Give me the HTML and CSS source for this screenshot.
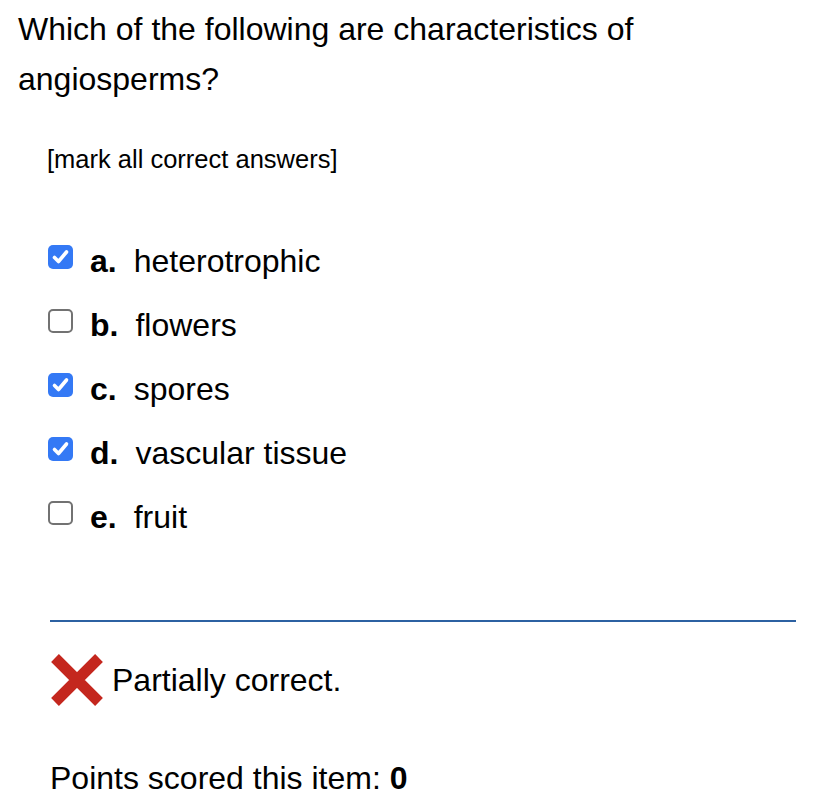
FILE: index.html
```html
<!DOCTYPE html>
<html lang="en">
<head>
<meta charset="utf-8">
<title>Question</title>
<link rel="stylesheet" href="styles.css">
</head>
<body>
<div class="question">
  <p class="prompt">Which of the following are characteristics of angiosperms?</p>
  <p class="instr">[mark all correct answers]</p>
  <ul class="options">
    <li class="option"><span class="box checked"><svg viewBox="0 0 25 24" width="25" height="24"><path d="M6.5 12.5 L10.5 16.5 L18.5 7" fill="none" stroke="#fff" stroke-width="3.6" stroke-linecap="round" stroke-linejoin="round"/></svg></span><b class="letter">a.</b><span class="text">heterotrophic</span></li>
    <li class="option"><span class="box"></span><b class="letter">b.</b><span class="text">flowers</span></li>
    <li class="option"><span class="box checked"><svg viewBox="0 0 25 24" width="25" height="24"><path d="M6.5 12.5 L10.5 16.5 L18.5 7" fill="none" stroke="#fff" stroke-width="3.6" stroke-linecap="round" stroke-linejoin="round"/></svg></span><b class="letter">c.</b><span class="text">spores</span></li>
    <li class="option"><span class="box checked"><svg viewBox="0 0 25 24" width="25" height="24"><path d="M6.5 12.5 L10.5 16.5 L18.5 7" fill="none" stroke="#fff" stroke-width="3.6" stroke-linecap="round" stroke-linejoin="round"/></svg></span><b class="letter">d.</b><span class="text">vascular tissue</span></li>
    <li class="option"><span class="box"></span><b class="letter">e.</b><span class="text">fruit</span></li>
  </ul>
  <div class="rule"></div>
  <div class="feedback">
    <svg class="xmark" viewBox="0 0 58 58" width="58" height="58">
      <path d="M7 7 L51 51 M51 7 L7 51" fill="none" stroke="#c4271e" stroke-width="11"/>
    </svg>
    <span class="feedback-text">Partially correct.</span>
  </div>
  <div class="points">Points scored this item: <b>0</b></div>
</div>
</body>
</html>
```

FILE: styles.css
```css
html, body {
  margin: 0;
  padding: 0;
  background: #ffffff;
}

body {
  font-family: "Liberation Sans", Arial, Helvetica, sans-serif;
  color: #000000;
}

.question {
  width: 836px;
}

.prompt {
  margin: 4px 0 0 18px;
  width: 700px;
  font-size: 32px;
  line-height: 50px;
}

.instr {
  margin: 40px 0 0 47px;
  font-size: 25.5px;
  line-height: 30px;
}

.options {
  list-style: none;
  margin: 55px 0 0 0;
  padding: 0 0 0 48px;
}

.option {
  display: flex;
  align-items: center;
  height: 64px;
  font-size: 32px;
  line-height: 64px;
}

.box {
  width: 25px;
  height: 24px;
  box-sizing: border-box;
  border: 2px solid #727272;
  border-radius: 5px;
  background: #ffffff;
  margin-bottom: 8px;
  margin-right: 17px;
  flex: none;
  display: flex;
}

.box.checked {
  border: none;
  background: #3479f5;
}

.letter {
  font-weight: bold;
  margin-right: 17px;
}

.rule {
  margin: 71px 40px 0 50px;
  height: 2px;
  background: #2c61a2;
}

.feedback {
  display: flex;
  align-items: center;
  margin: 29px 0 0 48px;
  height: 58px;
}

.xmark {
  flex: none;
  margin-right: 6px;
  filter: blur(0.5px);
}

.feedback-text {
  font-size: 32px;
  line-height: 58px;
}

.points {
  margin: 49px 0 0 50px;
  font-size: 32px;
  line-height: 40px;
}
```
